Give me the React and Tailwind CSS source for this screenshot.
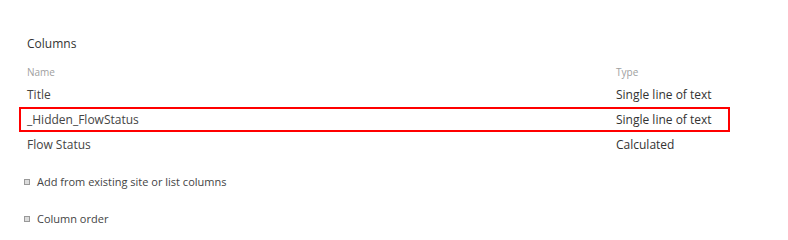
import React from 'react';

const rows = [
  { name: 'Title', type: 'Single line of text' },
  { name: '_Hidden_FlowStatus', type: 'Single line of text', highlight: true },
  { name: 'Flow Status', type: 'Calculated' },
];

const links = ['Add from existing site or list columns', 'Column order'];

const App = () => {
  return (
    <div className="w-[788px] h-[237px] bg-white font-['Open_Sans',sans-serif] text-[12px] text-[#444] overflow-hidden">
      <div className="pt-[35px] pl-[27px] leading-[18px] text-[12px] text-[#333]">Columns</div>

      {/* Columns table */}
      <div className="ml-[19px] w-[711px]">
        <div className="grid grid-cols-[589px_1fr] h-[20px] items-center px-[8px] text-[10px] text-[#a0a0a0] mt-[9px]">
          <span>Name</span>
          <span>Type</span>
        </div>
        {rows.map((row) => (
          <div
            key={row.name}
            className={`grid grid-cols-[589px_1fr] h-[25px] items-center px-[6px] border-2 ${
              row.highlight ? 'border-[#ff0000]' : 'border-transparent'
            }`}
          >
            <span>{row.name}</span>
            <span className="text-[#333]">{row.type}</span>
          </div>
        ))}
      </div>

      {/* Links */}
      <div className="mt-[16px] pl-[24px] flex flex-col gap-[19px] text-[11px]">
        {links.map((label) => (
          <div key={label} className="flex items-center gap-[7px] h-[18px]">
            <span className="w-[6px] h-[6px] border border-[#999] bg-[#dcdcdc]"></span>
            <span>{label}</span>
          </div>
        ))}
      </div>
    </div>
  );
};

export default App;
